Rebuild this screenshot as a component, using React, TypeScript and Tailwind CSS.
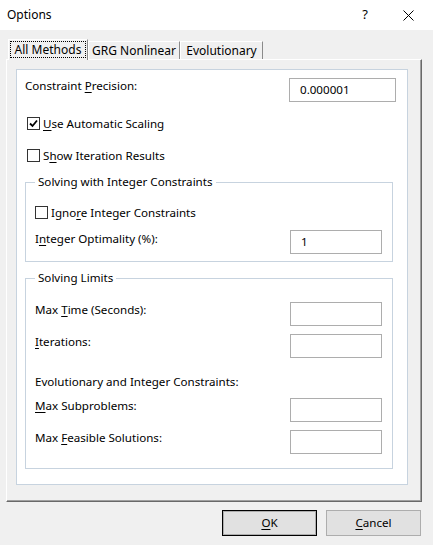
import React from 'react';

const Mn: React.FC<{ children: React.ReactNode }> = ({ children }) => (
  <span className="underline underline-offset-2 decoration-1">{children}</span>
);

const CheckBox: React.FC<{ checked?: boolean; children: React.ReactNode }> = ({ checked, children }) => (
  <div className="flex items-center h-[13px]">
    <div className="w-[13px] h-[13px] border border-[#333333] bg-white flex items-center justify-center shrink-0">
      {checked && (
        <svg width="9" height="9" viewBox="0 0 9 9">
          <path d="M1 4.5 L3.5 7 L8 1.5" fill="none" stroke="#000" strokeWidth="1.8" />
        </svg>
      )}
    </div>
    <span className="ml-[3px] leading-[16px]">{children}</span>
  </div>
);

const Field: React.FC<{ value?: string; className?: string }> = ({ value, className }) => (
  <div className={`ml-auto h-[24px] border border-[#adadad] bg-white flex items-center pl-[10px] ${className ?? ''}`}>
    {value}
  </div>
);

const Row: React.FC<{ label: React.ReactNode; value?: string; className?: string; fieldClass: string }> = ({
  label,
  value,
  className,
  fieldClass,
}) => (
  <div className={`flex items-start ${className ?? ''}`}>
    <span className="leading-[16px]">{label}</span>
    <Field value={value} className={fieldClass} />
  </div>
);

export default function App() {
  return (
    <div className="w-[433px] h-[545px] flex flex-col bg-[#f0f0f0] text-[11.6px] text-black font-['Segoe_UI','Noto_Sans',sans-serif] select-none">
      {/* title bar */}
      <div className="h-[30px] bg-white flex items-center shrink-0">
        <span className="pl-[7px] text-[12px]">Options</span>
        <span className="ml-auto text-[13px]">?</span>
        <svg className="ml-[35px] mr-[19px]" width="11" height="11" viewBox="0 0 11 11">
          <path d="M0.5 0.5 L10.5 10.5 M10.5 0.5 L0.5 10.5" stroke="#000" strokeWidth="1" />
        </svg>
      </div>

      {/* tabs */}
      <div className="flex items-end h-[20px] mt-[9px] pl-[8px]">
        <div className="relative z-10 h-[21px] -mb-[1px] w-[80px] bg-[#f0f0f0] border-t border-l border-white border-r border-r-[#8a8a8a] flex items-start justify-center pt-[1px]">
          <span className="border border-dotted border-black px-[3px] h-[17px] w-[76px] flex items-center justify-center leading-[16px] text-[12px]">
            All Methods
          </span>
        </div>
        <div className="h-[18px] w-[92px] border-t border-l border-white border-r border-r-[#8a8a8a] flex items-center justify-center leading-[16px] text-[12px]">
          GRG Nonlinear
        </div>
        <div className="h-[18px] w-[83px] border-t border-l border-white border-r border-r-[#8a8a8a] flex items-center justify-center leading-[16px] text-[12px]">
          Evolutionary
        </div>
      </div>

      {/* tab page */}
      <div className="ml-[6px] w-[416px] h-[443px] border-t border-l border-white border-r border-b border-r-[#696969] border-b-[#696969] shadow-[inset_-1px_-1px_0_#a0a0a0] pt-[9px] pl-[9px]">
        <div className="w-[392px] h-[416px] bg-white border border-[#c7d3df] pl-[8px] pt-[8px] flex flex-col">
          <Row
            label={<>Constraint <Mn>P</Mn>recision:</>}
            value="0.000001"
            fieldClass="w-[107px] mr-[11px]"
          />

          <div className="mt-[15px] ml-[2px]">
            <CheckBox checked>
              <Mn>U</Mn>se Automatic Scaling
            </CheckBox>
          </div>
          <div className="mt-[19px] ml-[2px]">
            <CheckBox>
              S<Mn>h</Mn>ow Iteration Results
            </CheckBox>
          </div>

          <fieldset className="mt-[12px] w-[368px] border border-[#c7d3df] pl-[9px] pr-[10px] pb-[7px]">
            <legend className="px-[3px] leading-[16px]">Solving with Integer Constraints</legend>
            <div className="mt-[16px]">
              <CheckBox>
                Igno<Mn>r</Mn>e Integer Constraints
              </CheckBox>
            </div>
            <Row
              className="mt-[11px] pt-[1px]"
              label={<>I<Mn>n</Mn>teger Optimality (%):</>}
              value="1"
              fieldClass="w-[92px] -mt-[1px]"
            />
          </fieldset>

          <fieldset className="mt-[8px] w-[368px] border border-[#c7d3df] pl-[9px] pr-[10px] pb-[14px]">
            <legend className="px-[3px] leading-[16px]">Solving Limits</legend>
            <Row className="mt-[16px]" label={<>Max <Mn>T</Mn>ime (Seconds):</>} fieldClass="w-[92px]" />
            <Row className="mt-[8px]" label={<><Mn>I</Mn>terations:</>} fieldClass="w-[92px]" />
            <div className="mt-[16px] leading-[16px]">Evolutionary and Integer Constraints:</div>
            <Row className="mt-[8px]" label={<><Mn>M</Mn>ax Subproblems:</>} fieldClass="w-[92px]" />
            <Row className="mt-[8px]" label={<>Max <Mn>F</Mn>easible Solutions:</>} fieldClass="w-[92px]" />
          </fieldset>
        </div>
      </div>

      {/* buttons */}
      <div className="flex justify-end gap-[9px] mt-[8px] pr-[12px]">
        <button className="w-[95px] h-[26px] bg-[#e1e1e1] border border-black shadow-[inset_0_0_0_1px_#adadad] flex items-center justify-center">
          <Mn>O</Mn>K
        </button>
        <button className="w-[95px] h-[26px] bg-[#e1e1e1] border border-[#adadad] flex items-center justify-center">
          <Mn>C</Mn>ancel
        </button>
      </div>
    </div>
  );
}
